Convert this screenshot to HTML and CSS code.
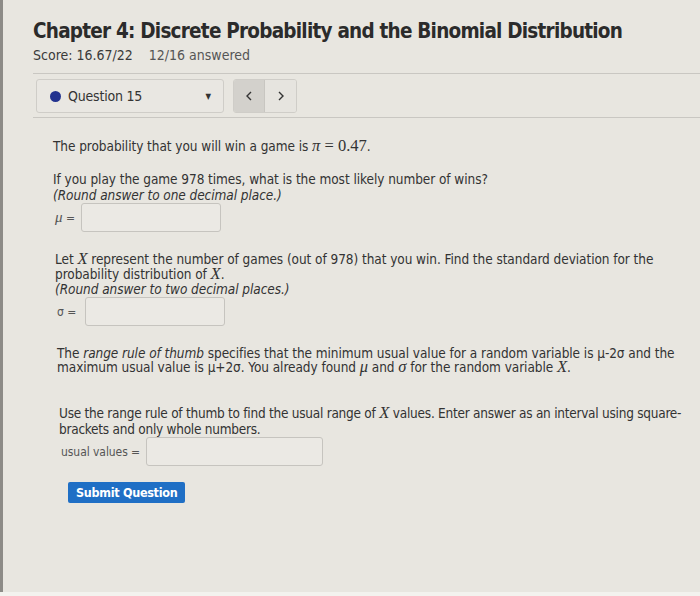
FILE: index.html
```html
<!DOCTYPE html>
<html>
<head>
<meta charset="utf-8">
<link rel="stylesheet" href="styles.css">
</head>
<body>
<div class="page">
  <header class="head">
    <h1 class="title">Chapter 4: Discrete Probability and the Binomial Distribution</h1>
    <div class="score"><span>Score: 16.67/22</span><span class="answered">12/16 answered</span></div>
  </header>
  <div class="toolbar">
    <div class="select">
      <span class="dot"></span>
      <span class="qlabel">Question 15</span>
      <span class="caret">&#9660;</span>
    </div>
    <div class="nav">
      <button class="navbtn prev">
        <svg width="8" height="10" viewBox="0 0 8 10"><path d="M6 1 L2 5 L6 9" fill="none" stroke="#333" stroke-width="1.4"/></svg>
      </button>
      <button class="navbtn next">
        <svg width="8" height="10" viewBox="0 0 8 10"><path d="M2 1 L6 5 L2 9" fill="none" stroke="#333" stroke-width="1.4"/></svg>
      </button>
    </div>
  </div>
  <main class="question">
    <p class="p1">The probability that you will win a game is <span class="math"><i>π</i> = 0.47</span>.</p>
    <div class="block b2">
      <p>If you play the game 978 times, what is the most likely number of wins?<br><i>(Round answer to one decimal place.)</i></p>
      <div class="answer"><span class="lbl mu"><i class="math">μ</i> =</span><span class="box"></span></div>
    </div>
    <div class="block b3">
      <p>Let <i class="math">X</i> represent the number of games (out of 978) that you win. Find the standard deviation for the probability distribution of <i class="math">X</i>.<br><i>(Round answer to two decimal places.)</i></p>
      <div class="answer"><span class="lbl">σ =</span><span class="box"></span></div>
    </div>
    <div class="block b4">
      <p>The <i>range rule of thumb</i> specifies that the minimum usual value for a random variable is μ-2σ and the maximum usual value is μ+2σ. You already found <i class="math">μ</i> and <i class="math">σ</i> for the random variable <i class="math">X</i>.</p>
    </div>
    <div class="block b5">
      <p>Use the range rule of thumb to find the usual range of <i class="math">X</i> values. Enter answer as an interval using square-brackets and only whole numbers.</p>
      <div class="answer"><span class="lbl">usual values =</span><span class="box wide"></span></div>
    </div>
    <button class="submit">Submit Question</button>
  </main>
</div>
</body>
</html>
```
FILE: styles.css
```css
html, body {
  margin: 0;
  padding: 0;
}
body {
  width: 700px;
  height: 596px;
  overflow: hidden;
  background: #f3f2ee;
  font-family: "DejaVu Sans Condensed", "DejaVu Sans", sans-serif;
  color: #333;
}
.page {
  height: 592px;
  border-left: 3px solid #8d8b87;
  background: #e8e6e0;
  padding-left: 30px;
  box-sizing: border-box;
}
.head {
  padding-top: 16px;
}
.title {
  margin: 0;
  font-size: 20.5px;
  font-weight: bold;
  color: #2b2b2b;
  line-height: 30px;
  letter-spacing: -0.77px;
  white-space: nowrap;
}
.score {
  font-size: 14px;
  color: #3a3a3a;
  line-height: 18px;
  display: flex;
  gap: 16px;
}
.answered {
  color: #555;
}
.toolbar {
  margin-top: 9px;
  border-top: 1px solid #c9c7c2;
  border-bottom: 1px solid #c9c7c2;
  padding: 5px 0 4px 3px;
  display: flex;
  gap: 9px;
}
.select {
  width: 188px;
  height: 34px;
  box-sizing: border-box;
  border: 1px solid #cfcdc8;
  border-radius: 3px;
  background: #e9e7e2;
  display: flex;
  align-items: center;
  padding-left: 13px;
}
.dot {
  width: 11px;
  height: 11px;
  border-radius: 50%;
  background: #23338f;
  margin-right: 7px;
}
.qlabel {
  font-size: 14px;
  color: #333;
  flex: 1;
  letter-spacing: -0.2px;
}
.caret {
  font-size: 8px;
  color: #333;
  margin-right: 12px;
}
.nav {
  display: flex;
  border: 1px solid #cfcdc8;
  border-radius: 3px;
  overflow: hidden;
  height: 34px;
  box-sizing: border-box;
}
.navbtn {
  width: 31px;
  border: none;
  margin: 0;
  padding: 0;
  display: flex;
  align-items: center;
  justify-content: center;
}
.prev {
  background: #d3d1cc;
  border-right: 1px solid #c8c6c1;
}
.next {
  background: #e6e4df;
}
.question {
  padding: 20px 0 0 20px;
  font-size: 13.5px;
  letter-spacing: -0.06px;
  line-height: 16px;
  color: #333;
}
.question p {
  margin: 0;
}
.math {
  font-family: "Liberation Serif", "DejaVu Serif", serif;
  font-size: 16.5px;
  letter-spacing: 0;
  line-height: 0;
}
.block {
  margin-top: 17px;
}
.b3 { margin-top: 20px; padding-left: 2px; }
.b3 p { line-height: 15px; }
.b4 { margin-top: 20px; padding-left: 4px; }
.b4 p { line-height: 14px; }
.b5 { margin-top: 31px; padding-left: 6px; }
.b5 p { letter-spacing: -0.25px; }
.answer {
  display: flex;
  align-items: center;
  margin-top: 0;
  gap: 6px;
}
.lbl {
  font-size: 12px;
  color: #555;
  padding-left: 2px;
}
.lbl .math {
  font-size: 15px;
  line-height: 1;
}
.box {
  width: 140px;
  height: 29px;
  box-sizing: border-box;
  border: 1px solid #c6c4bf;
  border-radius: 3px;
  background: #ebe9e4;
}
.b3 .box { margin-left: 3px; }
.wide {
  width: 177px;
}
.submit {
  margin: 16px 0 0 15px;
  background: #1f6fc5;
  color: #fff;
  border: none;
  border-radius: 2px;
  font-family: "DejaVu Sans Condensed", "DejaVu Sans", sans-serif;
  font-weight: bold;
  font-size: 12.5px;
  letter-spacing: -0.3px;
  height: 21px;
  padding: 0 8px;
}
```
